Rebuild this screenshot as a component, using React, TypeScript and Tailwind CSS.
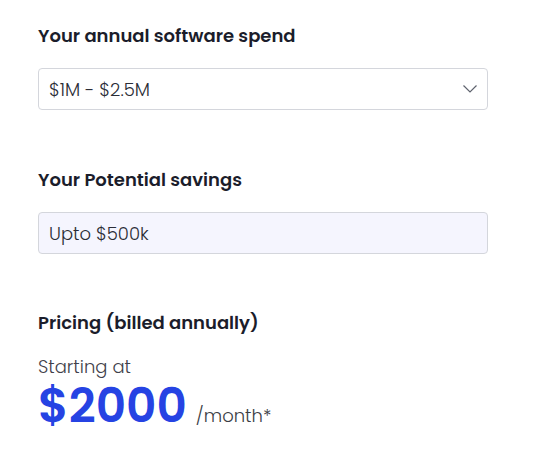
export default function App() {
  return (
    <div
      className="min-h-screen bg-white pt-[22px] pl-[38px] text-[#1b1d2b]"
      style={{ fontFamily: '"Poppins", "Open Sans", sans-serif' }}
    >
      <div className="w-[450px] flex flex-col">
        <label className="text-[18px] leading-[27px] font-semibold">Your annual software spend</label>
        <div className="mt-[19px] h-[42px] flex items-center justify-between border border-[#d4d6dc] rounded-[4px] pl-[10px] pr-[10px] bg-white">
          <span className="text-[18px] font-light text-[#2b2d36]">$1M - $2.5M</span>
          <svg width="14" height="8" viewBox="0 0 14 8" fill="none" className="text-[#5f636e]">
            <polyline points="0.5,0.5 7,7 13.5,0.5" stroke="currentColor" strokeWidth="1.2" />
          </svg>
        </div>

        <label className="mt-[56px] text-[18px] leading-[27px] font-semibold">Your Potential savings</label>
        <div className="mt-[19px] h-[42px] flex items-center border border-[#d4d6dc] rounded-[4px] pl-[10px] bg-[#f5f5fe]">
          <span className="text-[18px] font-light text-[#2b2d36]">Upto $500k</span>
        </div>

        <label className="mt-[55px] text-[18px] leading-[27px] font-semibold">Pricing (billed annually)</label>
        <div className="mt-[17px] text-[18px] leading-[27px] font-light text-[#3f414a]">Starting at</div>
        <div className="flex items-baseline gap-[9px] mt-[2px]">
          <span className="text-[47px] leading-[48px] font-semibold text-[#2643e3]">$2000</span>
          <span className="text-[18px] font-light text-[#3b3d45]">/month*</span>
        </div>
      </div>
    </div>
  );
}
